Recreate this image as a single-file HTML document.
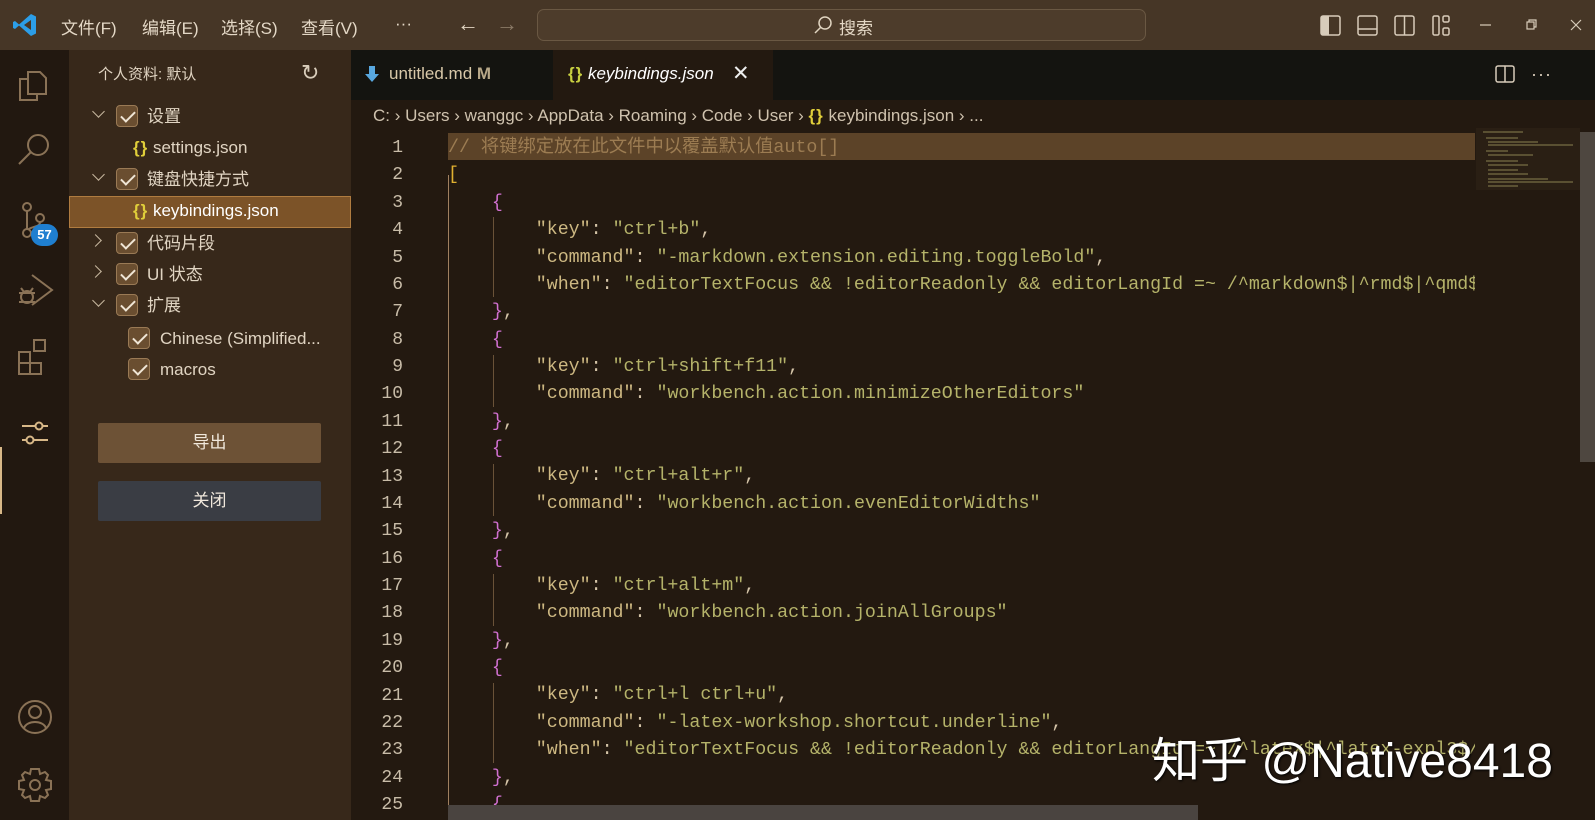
<!DOCTYPE html>
<html><head><meta charset="utf-8"><style>
*{margin:0;padding:0;box-sizing:border-box}
body{width:1595px;height:820px;overflow:hidden;background:#231910;font-family:"Liberation Sans","Noto Sans CJK SC",sans-serif;color:#d8cbb8;position:relative}
.abs{position:absolute}
#title{left:0;top:0;width:1595px;height:50px;background:#463626}
.menu{top:14px;font-size:17px;color:#e4d8c6}
#search{left:537px;top:9px;width:609px;height:32px;border:1px solid #6a5843;border-radius:7px;background:#4d3c2b}
#act{left:0;top:50px;width:69px;height:770px;background:#221810}
#side{left:69px;top:50px;width:282px;height:770px;background:#37281a}
#tabs{left:351px;top:50px;width:1244px;height:50px;background:#141410}
.row{position:absolute;font-size:17px;color:#e0d4c2;height:24px;line-height:24px}
.cb{position:absolute;width:22px;height:22px;border:1px solid #9a7a55;border-radius:4px;background:#6a4e30}
.cb:after{content:"";position:absolute;left:7px;top:2px;width:6px;height:12px;border:solid #f0e6d6;border-width:0 2px 2px 0;transform:rotate(45deg)}
.chev{position:absolute;width:9px;height:9px;border:solid #c8b8a0;border-width:0 1.5px 1.5px 0}
.br{color:#e0ce3a;font-weight:bold;letter-spacing:1px}
#code{left:448px;top:135px;width:1027px;height:685px;overflow:hidden;font-family:"Liberation Mono","Noto Sans CJK SC",monospace;font-size:18.3px}
.ln{position:absolute;left:351px;width:52px;text-align:right;font-family:"Liberation Mono",monospace;font-size:18px;color:#c8bca8}
.l{position:absolute;left:0;height:27px;line-height:27px;white-space:pre;color:#d4c4a8}
.k{color:#cdb882}.v{color:#b5b36a}.p{color:#d070d0}.y{color:#e0b030}.c{color:#9c7c52}
</style></head><body>
<div id="title" class="abs">
<svg class="abs" style="left:12px;top:12px" width="26" height="26" viewBox="0 0 26 26"><path d="M19 2 L24 4.5 V21.5 L19 24 L7 13.5 L3 17 L1 16 V10 L3 9 L7 12.5 Z M19 8 L12 13 L19 18 Z" fill="#2c9ee8"/></svg>
<span class="abs menu" style="left:61px">文件(F)</span>
<span class="abs menu" style="left:142px">编辑(E)</span>
<span class="abs menu" style="left:221px">选择(S)</span>
<span class="abs menu" style="left:301px">查看(V)</span>
<span class="abs menu" style="left:395px;top:14px">···</span>
<span class="abs" style="left:457px;top:11px;font-size:22px;color:#e0d4c0">←</span>
<span class="abs" style="left:496px;top:11px;font-size:22px;color:#8a7a66">→</span>
<div id="search" class="abs"></div>
<svg class="abs" style="left:813px;top:15px" width="20" height="20" viewBox="0 0 20 20"><circle cx="12" cy="8" r="6" fill="none" stroke="#e0d4c0" stroke-width="1.5"/><path d="M7.5 12.5 L2 18" stroke="#e0d4c0" stroke-width="1.5"/></svg>
<span class="abs" style="left:839px;top:14px;font-size:17px;color:#e4d8c6">搜索</span>
<svg class="abs" style="left:1320px;top:15px" width="270" height="22" viewBox="0 0 270 22">
<rect x="1" y="1" width="19" height="19" rx="2" fill="none" stroke="#d8ccba" stroke-width="1.5"/><rect x="1" y="1" width="8" height="19" fill="#d8ccba"/>
<rect x="38" y="1" width="19" height="19" rx="2" fill="none" stroke="#d8ccba" stroke-width="1.5"/><path d="M38 14 H57" stroke="#d8ccba" stroke-width="1.5"/>
<rect x="75" y="1" width="19" height="19" rx="2" fill="none" stroke="#d8ccba" stroke-width="1.5"/><path d="M84.5 1 V20" stroke="#d8ccba" stroke-width="1.5"/>
<rect x="113" y="1" width="6" height="19" rx="1.5" fill="none" stroke="#d8ccba" stroke-width="1.5"/><rect x="123" y="1" width="6" height="6" rx="1.5" fill="none" stroke="#d8ccba" stroke-width="1.5"/><rect x="123" y="13" width="6" height="7" rx="1.5" fill="none" stroke="#d8ccba" stroke-width="1.5"/>
<path d="M160 10 H171" stroke="#d8ccba" stroke-width="1.2"/>
<rect x="207" y="7" width="7" height="7" fill="none" stroke="#d8ccba" stroke-width="1.2"/><path d="M209 7 V5 H216 V12 H214" fill="none" stroke="#d8ccba" stroke-width="1.2"/>
<path d="M251 5 L261 15 M261 5 L251 15" stroke="#d8ccba" stroke-width="1.2"/>
</svg>
</div>
<div id="act" class="abs">
<svg class="abs" style="left:0;top:0" width="69" height="770" viewBox="0 0 69 770" fill="none" stroke="#8a7256" stroke-width="2">
<path d="M28 22 H40 L46 28 V44 H28 Z M28 29 H20 V50 H37 V44"/>
<circle cx="38" cy="95" r="10"/><path d="M31 102 L19 114"/>
<circle cx="27" cy="157" r="4"/><circle cx="40" cy="168" r="4"/><circle cx="27" cy="183" r="4"/><path d="M27 161 V179 M40 172 C40 178 30 176 28 180"/>
<path d="M32 225 L52 240 L32 255"/><circle cx="27" cy="247" r="6"/><path d="M19 243 H35 M19 252 H35 M21 238 L24 242 M33 238 L30 242"/>
<rect x="19" y="313" width="11" height="11"/><rect x="19" y="302" width="11" height="11"/><rect x="30" y="313" width="11" height="11"/><rect x="34" y="290" width="11" height="11"/>
<g stroke="#d8b888"><path d="M22 376 H48 M22 390 H48"/><circle cx="39" cy="376" r="3.5" fill="#221810"/><circle cx="30" cy="390" r="3.5" fill="#221810"/></g>
<circle cx="35" cy="667" r="16"/><circle cx="35" cy="662" r="6"/><path d="M24 678 C27 670 43 670 46 678"/>
<circle cx="35" cy="735" r="5"/><path d="M35 719 L39 719 L40 724 L45 722 L48 725 L46 730 L51 731 V739 L46 740 L48 745 L45 748 L40 746 L39 751 H31 L30 746 L25 748 L22 745 L24 740 L19 739 V731 L24 730 L22 725 L25 722 L30 724 L31 719 Z"/>
</svg>
<div class="abs" style="left:0;top:397px;width:2px;height:67px;background:#d8b888"></div>
<div class="abs" style="left:31px;top:174px;width:27px;height:22px;border-radius:11px;background:#1f7fd0;color:#fff;font-size:13px;font-weight:bold;text-align:center;line-height:22px">57</div>
</div>
<div id="side" class="abs">
<span class="row" style="left:29px;top:13px;font-size:15px">个人资料: 默认</span>
<span class="abs" style="left:232px;top:10px;font-size:22px;color:#d8ccba">↻</span>
<div class="chev" style="left:25px;top:57px;transform:rotate(45deg)"></div><div class="cb" style="left:47px;top:55px"></div><span class="row" style="left:78px;top:55px">设置</span>
<span class="row" style="left:64px;top:86px"><span class="br">{}</span> settings.json</span>
<div class="chev" style="left:25px;top:120px;transform:rotate(45deg)"></div><div class="cb" style="left:47px;top:118px"></div><span class="row" style="left:78px;top:118px">键盘快捷方式</span>
<div class="abs" style="left:0;top:146px;width:282px;height:32px;background:#7c5328;border:1px solid #b07c40"></div>
<span class="row" style="left:64px;top:149px;color:#fff"><span class="br">{}</span> keybindings.json</span>
<div class="chev" style="left:22px;top:186px;transform:rotate(-45deg)"></div><div class="cb" style="left:47px;top:182px"></div><span class="row" style="left:78px;top:182px">代码片段</span>
<div class="chev" style="left:22px;top:217px;transform:rotate(-45deg)"></div><div class="cb" style="left:47px;top:213px"></div><span class="row" style="left:78px;top:213px">UI 状态</span>
<div class="chev" style="left:25px;top:246px;transform:rotate(45deg)"></div><div class="cb" style="left:47px;top:244px"></div><span class="row" style="left:78px;top:244px">扩展</span>
<div class="cb" style="left:59px;top:277px"></div><span class="row" style="left:91px;top:277px">Chinese (Simplified...</span>
<div class="cb" style="left:59px;top:308px"></div><span class="row" style="left:91px;top:308px">macros</span>
<div class="abs" style="left:29px;top:373px;width:223px;height:40px;background:#6d5236;border-radius:2px;color:#f0e8dc;font-size:17px;text-align:center;line-height:40px">导出</div>
<div class="abs" style="left:29px;top:431px;width:223px;height:40px;background:#3a3d44;border-radius:2px;color:#f0e8dc;font-size:17px;text-align:center;line-height:40px">关闭</div>
</div>
<div id="tabs" class="abs">
<svg class="abs" style="left:14px;top:16px" width="14" height="16" viewBox="0 0 14 16"><path d="M4 0 H10 V8 H14 L7 16 L0 8 H4 Z" fill="#58a8e0"/></svg>
<span class="abs" style="left:38px;top:14px;font-size:17px;color:#d8c8a8">untitled.md <b style="color:#b8a888">M</b></span>
<div class="abs" style="left:202px;top:0;width:220px;height:50px;background:#231910"></div>
<span class="abs" style="left:217px;top:14px;font-size:17px;color:#fff"><span class="br" style="color:#c8d040">{}</span> <i>keybindings.json</i></span>
<span class="abs" style="left:381px;top:11px;font-size:21px;color:#eee">✕</span>
<svg class="abs" style="left:1144px;top:14px" width="20" height="20" viewBox="0 0 20 20"><rect x="1" y="2" width="18" height="16" rx="2" fill="none" stroke="#d8ccba" stroke-width="1.5"/><path d="M10 2 V18" stroke="#d8ccba" stroke-width="1.5"/></svg>
<span class="abs" style="left:1180px;top:14px;font-size:18px;color:#d8ccba;letter-spacing:1px">···</span>
</div>
<div class="abs" style="left:373px;top:106px;font-size:17px;color:#cfc2ae;white-space:pre">C: › Users › wanggc › AppData › Roaming › Code › User › <span class="br">{}</span> keybindings.json › ...</div>
<div class="abs" style="left:448px;top:133px;width:1027px;height:27px;background:#5c4328"></div>
<div class="abs" style="left:448px;top:175px;width:1px;height:645px;background:#a08060"></div>
<div class="abs" style="left:493px;top:217px;width:1px;height:80px;background:#6a5238"></div>
<div class="abs" style="left:493px;top:355px;width:1px;height:52px;background:#6a5238"></div>
<div class="abs" style="left:493px;top:464px;width:1px;height:52px;background:#6a5238"></div>
<div class="abs" style="left:493px;top:574px;width:1px;height:52px;background:#6a5238"></div>
<div class="abs" style="left:493px;top:683px;width:1px;height:80px;background:#6a5238"></div>
<div id="code" class="abs">
<div class="l" style="top:0"><span class="c">// 将键绑定放在此文件中以覆盖默认值auto[]</span></div>
<div class="l" style="top:27.4px"><span class="y">[</span></div>
<div class="l" style="top:54.7px">    <span class="p">{</span></div>
<div class="l" style="top:82.1px">        <span class="k">"key"</span>: <span class="v">"ctrl+b"</span>,</div>
<div class="l" style="top:109.5px">        <span class="k">"command"</span>: <span class="v">"-markdown.extension.editing.toggleBold"</span>,</div>
<div class="l" style="top:136.8px">        <span class="k">"when"</span>: <span class="v">"editorTextFocus &amp;&amp; !editorReadonly &amp;&amp; editorLangId =~ /^markdown$|^rmd$|^qmd$/"</span></div>
<div class="l" style="top:164.2px">    <span class="p">}</span>,</div>
<div class="l" style="top:191.6px">    <span class="p">{</span></div>
<div class="l" style="top:218.9px">        <span class="k">"key"</span>: <span class="v">"ctrl+shift+f11"</span>,</div>
<div class="l" style="top:246.3px">        <span class="k">"command"</span>: <span class="v">"workbench.action.minimizeOtherEditors"</span></div>
<div class="l" style="top:273.7px">    <span class="p">}</span>,</div>
<div class="l" style="top:301px">    <span class="p">{</span></div>
<div class="l" style="top:328.4px">        <span class="k">"key"</span>: <span class="v">"ctrl+alt+r"</span>,</div>
<div class="l" style="top:355.8px">        <span class="k">"command"</span>: <span class="v">"workbench.action.evenEditorWidths"</span></div>
<div class="l" style="top:383.2px">    <span class="p">}</span>,</div>
<div class="l" style="top:410.5px">    <span class="p">{</span></div>
<div class="l" style="top:437.9px">        <span class="k">"key"</span>: <span class="v">"ctrl+alt+m"</span>,</div>
<div class="l" style="top:465.3px">        <span class="k">"command"</span>: <span class="v">"workbench.action.joinAllGroups"</span></div>
<div class="l" style="top:492.6px">    <span class="p">}</span>,</div>
<div class="l" style="top:520px">    <span class="p">{</span></div>
<div class="l" style="top:547.4px">        <span class="k">"key"</span>: <span class="v">"ctrl+l ctrl+u"</span>,</div>
<div class="l" style="top:574.7px">        <span class="k">"command"</span>: <span class="v">"-latex-workshop.shortcut.underline"</span>,</div>
<div class="l" style="top:602.1px">        <span class="k">"when"</span>: <span class="v">"editorTextFocus &amp;&amp; !editorReadonly &amp;&amp; editorLangId =~ /^latex$|^latex-expl3$/"</span></div>
<div class="l" style="top:629.5px">    <span class="p">}</span>,</div>
<div class="l" style="top:656.8px">    <span class="p">{</span></div>
</div>
<div class="ln" style="top:135px;line-height:27.37px">1<br>2<br>3<br>4<br>5<br>6<br>7<br>8<br>9<br>10<br>11<br>12<br>13<br>14<br>15<br>16<br>17<br>18<br>19<br>20<br>21<br>22<br>23<br>24<br>25</div>
<div class="abs" style="left:448px;top:805px;width:750px;height:15px;background:#4a4440"></div>
<div class="abs" style="left:1476px;top:128px;width:104px;height:62px;background:#2a1f14"></div>
<svg class="abs" style="left:1478px;top:130px" width="100" height="60"><g stroke="#8a8050" stroke-width="1"><path d="M5 2 H45 M8 8 H40 M10 12 H60 M10 15 H95 M8 21 H30 M10 25 H55 M8 31 H40 M10 35 H50 M10 40 H40 M10 44 H50 M10 49 H70 M10 52 H95 M10 56 H40"/></g></svg>
<div class="abs" style="left:1580px;top:132px;width:15px;height:330px;background:#4e4740"></div>
<div class="abs" style="left:1152px;top:721px;font-size:48px;color:#fff;text-shadow:1px 1px 2px #000;white-space:nowrap">知乎 @Native8418</div>
</body></html>
